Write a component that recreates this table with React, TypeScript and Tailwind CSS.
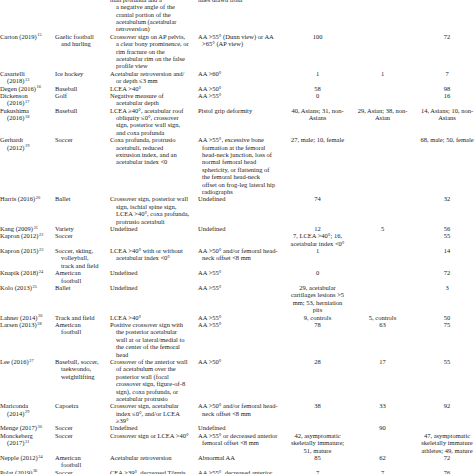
import React from "react";

type Row = {
  a: string[];
  sup?: string;
  s: string[];
  p: string[];
  c: string[];
  n1: string[];
  n2: string[];
  n3: string[];
};

const rows: Row[] = [
  {
    a: [""],
    s: [],
    p: ["than profunda and a", "a negative angle of the", "cranial portion of the", "acetabulum (acetabular", "retroversion)"],
    c: ["lines drawn from"],
    n1: [],
    n2: [],
    n3: [],
  },
  {
    a: ["Carton (2019)"],
    sup: "15",
    s: ["Gaelic football", "and hurling"],
    p: ["Crossover sign on AP pelvis,", "a clear bony prominence, or", "rim fracture on the", "acetabular rim on the false", "profile view"],
    c: ["AA >55° (Dunn view) or AA", ">65° (AP view)"],
    n1: ["100"],
    n2: [],
    n3: ["72"],
  },
  {
    a: ["Casartelli", "(2018)"],
    sup: "13",
    s: ["Ice hockey"],
    p: ["Acetabular retroversion and/", "or depth ≤3 mm"],
    c: ["AA >60°"],
    n1: ["1"],
    n2: ["1"],
    n3: ["7"],
  },
  {
    a: ["Degen (2016)"],
    sup: "16",
    s: ["Baseball"],
    p: ["LCEA >40°"],
    c: ["AA >50°"],
    n1: ["58"],
    n2: [],
    n3: ["98"],
  },
  {
    a: ["Dickenson", "(2016)"],
    sup: "17",
    s: ["Golf"],
    p: ["Negative measure of", "acetabular depth"],
    c: ["AA >55°"],
    n1: ["0"],
    n2: [],
    n3: ["16"],
  },
  {
    a: ["Fukushima", "(2016)"],
    sup: "18",
    s: ["Baseball"],
    p: ["LCEA ≥40°, acetabular roof", "obliquity ≤0°, crossover", "sign, posterior wall sign,", "and coxa profunda"],
    c: ["Pistol grip deformity"],
    n1: ["40, Asians; 31, non-", "Asians"],
    n2: ["29, Asian; 38, non-", "Asian"],
    n3: ["14, Asians; 10, non-", "Asians"],
  },
  {
    a: ["Gerhardt", "(2012)"],
    sup: "19",
    s: ["Soccer"],
    p: ["Coxa profunda, protrusio", "acetabuli, reduced", "extrusion index, and an", "acetabular index <0"],
    c: [
      "AA >55°, excessive bone",
      "formation at the femoral",
      "head-neck junction, loss of",
      "normal femoral head",
      "sphericity, or flattening of",
      "the femoral head-neck",
      "offset on frog-leg lateral hip",
      "radiographs",
    ],
    n1: ["27, male; 10, female"],
    n2: [],
    n3: ["68, male; 50, female"],
  },
  {
    a: ["Harris (2016)"],
    sup: "20",
    s: ["Ballet"],
    p: ["Crossover sign, posterior wall", "sign, ischial spine sign,", "LCEA >40°, coxa profunda,", "protrusio acetabuli"],
    c: ["Undefined"],
    n1: ["74"],
    n2: [],
    n3: ["32"],
  },
  {
    a: ["Kang (2009)"],
    sup: "21",
    s: ["Variety"],
    p: ["Undefined"],
    c: ["Undefined"],
    n1: ["12"],
    n2: ["5"],
    n3: ["56"],
  },
  {
    a: ["Kapron (2012)"],
    sup: "22",
    s: ["Soccer"],
    p: [],
    c: [],
    n1: ["7, LCEA >40°; 16,", "acetabular index <0°"],
    n2: [],
    n3: ["55"],
  },
  {
    a: ["Kapron (2015)"],
    sup: "23",
    s: ["Soccer, skiing,", "volleyball,", "track and field"],
    p: ["LCEA >40° with or without", "acetabular index <0°"],
    c: ["AA >50° and/or femoral head-", "neck offset <8 mm"],
    n1: ["1"],
    n2: [],
    n3: ["14"],
  },
  {
    a: ["Knapik (2018)"],
    sup: "24",
    s: ["American", "football"],
    p: ["Undefined"],
    c: ["AA >55°"],
    n1: ["0"],
    n2: [],
    n3: ["72"],
  },
  {
    a: ["Kolo (2013)"],
    sup: "25",
    s: ["Ballet"],
    p: ["Undefined"],
    c: ["AA >55°"],
    n1: ["29, acetabular", "cartilages lesions >5", "mm; 53, herniation", "pits"],
    n2: [],
    n3: ["3"],
  },
  {
    a: ["Lahner (2014)"],
    sup: "26",
    s: ["Track and field"],
    p: ["LCEA >40°"],
    c: ["AA >55°"],
    n1: ["9, controls"],
    n2: ["5, controls"],
    n3: ["50"],
  },
  {
    a: ["Larsen (2013)"],
    sup: "28",
    s: ["American", "football"],
    p: [
      "Positive crossover sign with",
      "the posterior acetabular",
      "wall at or lateral/medial to",
      "the center of the femoral",
      "head",
    ],
    c: ["AA >55°"],
    n1: ["78"],
    n2: ["63"],
    n3: ["75"],
  },
  {
    a: ["Lee (2016)"],
    sup: "27",
    s: ["Baseball, soccer,", "taekwondo,", "weightlifting"],
    p: [
      "Crossover of the anterior wall",
      "of acetabulum over the",
      "posterior wall (focal",
      "crossover sign, figure-of-8",
      "sign), coxa profunda, or",
      "acetabular protrusio",
    ],
    c: ["AA >50°"],
    n1: ["28"],
    n2: ["17"],
    n3: ["55"],
  },
  {
    a: ["Mariconda", "(2014)"],
    sup: "29",
    s: ["Capoeira"],
    p: ["Crossover sign, acetabular", "index ≤0°, and/or LCEA", "≥39°"],
    c: ["AA >50° and/or femoral head-", "neck offset <8 mm"],
    n1: ["38"],
    n2: ["33"],
    n3: ["92"],
  },
  {
    a: ["Menge (2017)"],
    sup: "30",
    s: ["Soccer"],
    p: ["Undefined"],
    c: ["Undefined"],
    n1: [],
    n2: ["90"],
    n3: [],
  },
  {
    a: ["Monckeberg", "(2017)"],
    sup: "31",
    s: ["Soccer"],
    p: ["Crossover sign or LCEA >40°"],
    c: ["AA >55° or decreased anterior", "femoral offset <8 mm"],
    n1: ["42, asymptomatic", "skeletally immature;", "51, mature"],
    n2: [],
    n3: ["47, asymptomatic", "skeletally immature", "athletes; 49, mature"],
  },
  {
    a: ["Nepple (2012)"],
    sup: "34",
    s: ["American", "football"],
    p: ["Acetabular retroversion"],
    c: ["Abnormal AA"],
    n1: ["85"],
    n2: ["62"],
    n3: ["72"],
  },
  {
    a: ["Polat (2019)"],
    sup: "36",
    s: ["Soccer"],
    p: ["CEA >39°, decreased Tönnis"],
    c: ["AA >55°, decreased anterior"],
    n1: ["7"],
    n2: ["7"],
    n3: ["76"],
  },
];

function TextCell({ lines, indent, sup }: { lines: string[]; indent: string; sup?: string }) {
  return (
    <div>
      {lines.map((l, i) => (
        <div key={i} className={`h-[7.4px] leading-[7.4px] whitespace-nowrap ${i > 0 ? indent : ""}`}>
          {l}
          {sup && i === lines.length - 1 ? <sup className="text-[4.4px] -top-[2.4px] ml-[0.6px]">{sup}</sup> : null}
        </div>
      ))}
    </div>
  );
}

function NumCell({ lines }: { lines: string[] }) {
  return (
    <div className="text-center">
      {lines.map((l, i) => (
        <div key={i} className="h-[7.4px] leading-[7.4px] whitespace-nowrap">
          {l}
        </div>
      ))}
    </div>
  );
}

export default function App() {
  return (
    <div
      className="w-[474px] h-[474px] overflow-hidden bg-white text-[#1a1a1a] text-[6.5px]"
      style={{ fontFamily: '"Liberation Serif", "Times New Roman", serif' }}
    >
      <div className="-mt-[4.2px] grid grid-cols-[55px_55px_88px_87px_65px_65px_64px]">
        {rows.map((r, i) => (
          <React.Fragment key={i}>
            <TextCell lines={r.a} indent="pl-[7px]" sup={r.sup} />
            <TextCell lines={r.s} indent="pl-[6px]" />
            <TextCell lines={r.p} indent="pl-[6px]" />
            <TextCell lines={r.c} indent="pl-[4px]" />
            <NumCell lines={r.n1} />
            <NumCell lines={r.n2} />
            <NumCell lines={r.n3} />
          </React.Fragment>
        ))}
      </div>
    </div>
  );
}
